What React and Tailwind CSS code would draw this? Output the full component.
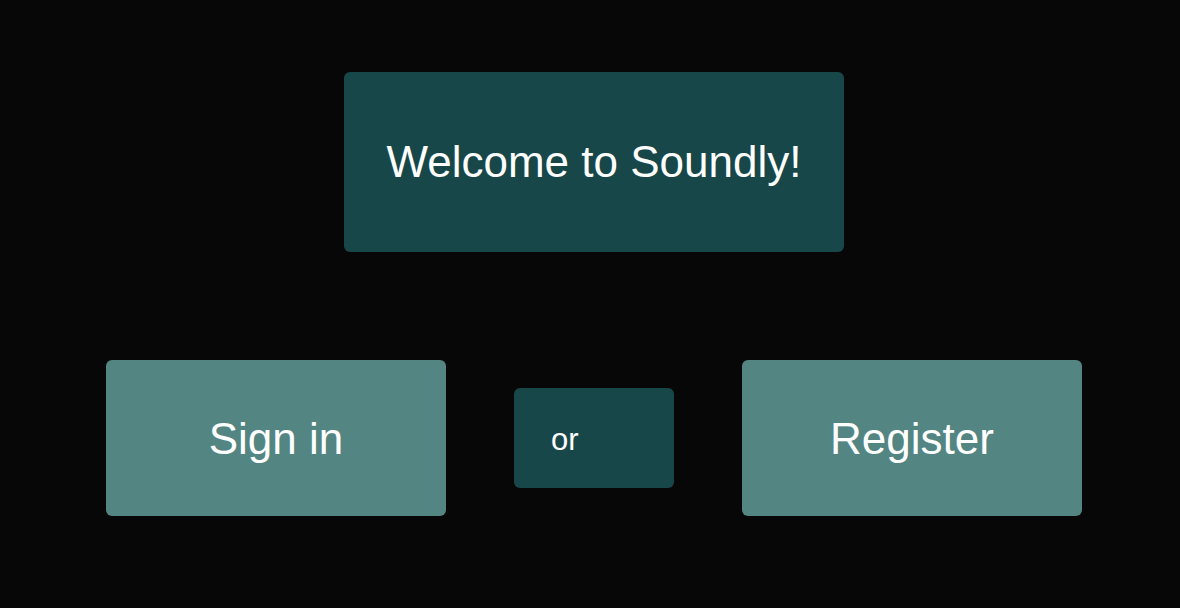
export default function App() {
  return (
    <div
      className="w-[1180px] h-[608px] bg-[#070707] flex flex-col items-center pt-[72px] pl-2 gap-[108px] text-white"
      style={{ fontFamily: '"Liberation Sans", Arial, sans-serif' }}
    >
      <div className="w-[500px] h-[180px] rounded-[6px] bg-[#174749] flex items-center justify-center text-[44px] leading-none">
        Welcome to Soundly!
      </div>
      <div className="flex items-center gap-[68px]">
        <button className="w-[340px] h-[156px] rounded-[6px] bg-[#538583] flex items-center justify-center pt-[2px] text-[44px] leading-none text-white">
          Sign in
        </button>
        <div className="w-[160px] h-[100px] rounded-[6px] bg-[#174749] flex items-center pl-[37px] pt-[2px] text-[31px] leading-none">
          or
        </div>
        <button className="w-[340px] h-[156px] rounded-[6px] bg-[#538583] flex items-center justify-center pt-[2px] text-[44px] leading-none text-white">
          Register
        </button>
      </div>
    </div>
  );
}
